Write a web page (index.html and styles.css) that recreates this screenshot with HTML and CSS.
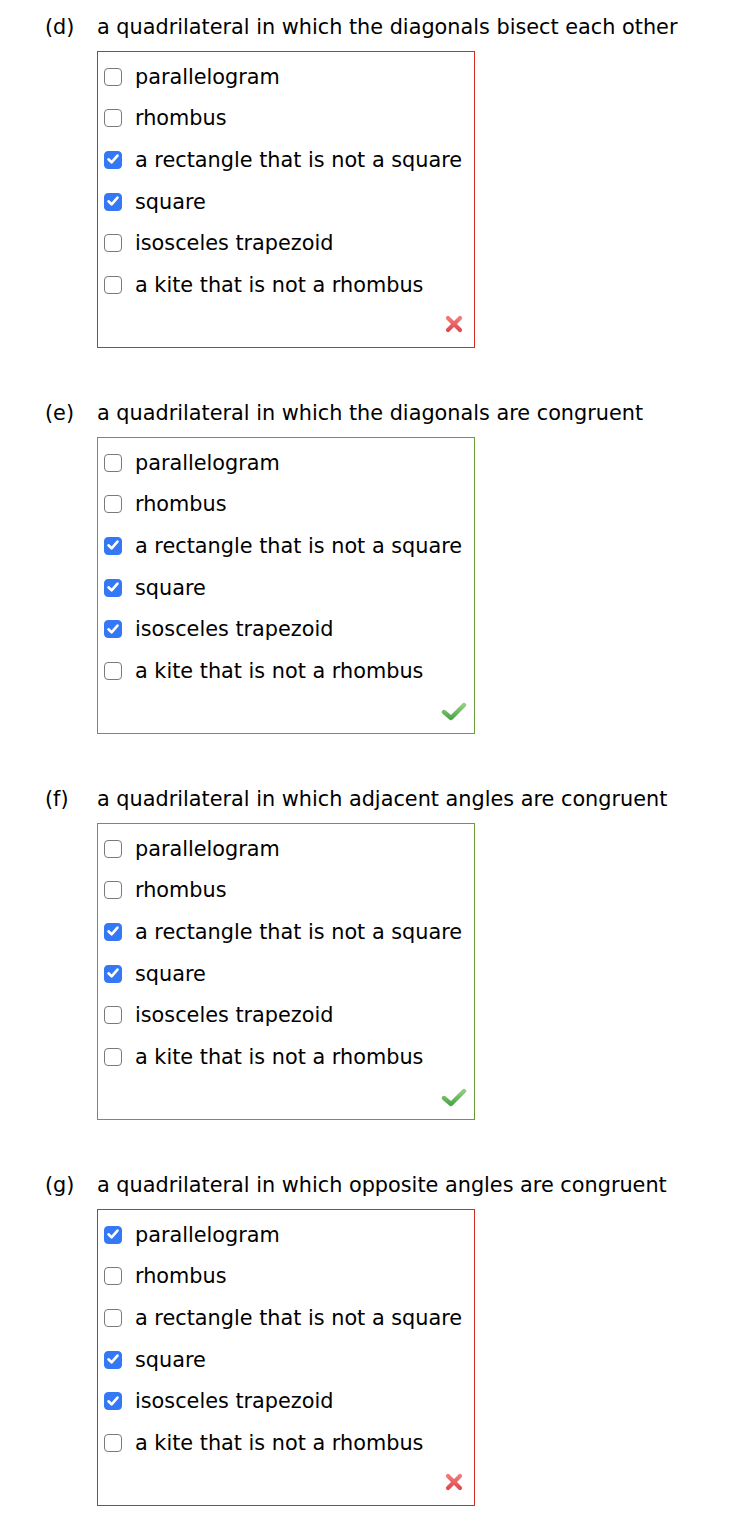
FILE: index.html
```html
<!DOCTYPE html>
<html>
<head>
<meta charset="utf-8">
<link rel="stylesheet" href="styles.css">
</head>
<body>
<div class="page">

<section class="q">
  <div class="qhead"><span class="qlab">(d)</span><span class="qtext">a quadrilateral in which the diagonals bisect each other</span></div>
  <div class="box wrong">
    <div class="opt"><span class="cb"></span>parallelogram</div>
    <div class="opt"><span class="cb"></span>rhombus</div>
    <div class="opt"><span class="cb on"><svg viewBox="0 0 18 18"><path d="M4.5 9.3 L7.6 12.3 L13.5 5.6" fill="none" stroke="#fff" stroke-width="2.6" stroke-linecap="round" stroke-linejoin="round"/></svg></span>a rectangle that is not a square</div>
    <div class="opt"><span class="cb on"><svg viewBox="0 0 18 18"><path d="M4.5 9.3 L7.6 12.3 L13.5 5.6" fill="none" stroke="#fff" stroke-width="2.6" stroke-linecap="round" stroke-linejoin="round"/></svg></span>square</div>
    <div class="opt"><span class="cb"></span>isosceles trapezoid</div>
    <div class="opt"><span class="cb"></span>a kite that is not a rhombus</div>
    <div class="foot"><svg class="xmark" viewBox="0 0 20 20"><defs><linearGradient id="rx" x1="0" y1="0" x2="0" y2="1"><stop offset="0" stop-color="#f07a7a"/><stop offset="1" stop-color="#e04b4f"/></linearGradient></defs><path d="M4 4 L16 16 M16 4 L4 16" stroke="url(#rx)" stroke-width="4.2" stroke-linecap="round"/></svg></div>
  </div>
</section>

<section class="q">
  <div class="qhead"><span class="qlab">(e)</span><span class="qtext">a quadrilateral in which the diagonals are congruent</span></div>
  <div class="box right">
    <div class="opt"><span class="cb"></span>parallelogram</div>
    <div class="opt"><span class="cb"></span>rhombus</div>
    <div class="opt"><span class="cb on"><svg viewBox="0 0 18 18"><path d="M4.5 9.3 L7.6 12.3 L13.5 5.6" fill="none" stroke="#fff" stroke-width="2.6" stroke-linecap="round" stroke-linejoin="round"/></svg></span>a rectangle that is not a square</div>
    <div class="opt"><span class="cb on"><svg viewBox="0 0 18 18"><path d="M4.5 9.3 L7.6 12.3 L13.5 5.6" fill="none" stroke="#fff" stroke-width="2.6" stroke-linecap="round" stroke-linejoin="round"/></svg></span>square</div>
    <div class="opt"><span class="cb on"><svg viewBox="0 0 18 18"><path d="M4.5 9.3 L7.6 12.3 L13.5 5.6" fill="none" stroke="#fff" stroke-width="2.6" stroke-linecap="round" stroke-linejoin="round"/></svg></span>isosceles trapezoid</div>
    <div class="opt"><span class="cb"></span>a kite that is not a rhombus</div>
    <div class="foot"><svg class="ckmark" viewBox="0 0 26 20"><defs><linearGradient id="gc1" x1="0" y1="0" x2="0" y2="1"><stop offset="0" stop-color="#8fcf7f"/><stop offset="1" stop-color="#4fa64a"/></linearGradient></defs><path d="M3 11 L10 17 L23 4" fill="none" stroke="url(#gc1)" stroke-width="4.4" stroke-linecap="round" stroke-linejoin="round"/></svg></div>
  </div>
</section>

<section class="q">
  <div class="qhead"><span class="qlab">(f)</span><span class="qtext">a quadrilateral in which adjacent angles are congruent</span></div>
  <div class="box right">
    <div class="opt"><span class="cb"></span>parallelogram</div>
    <div class="opt"><span class="cb"></span>rhombus</div>
    <div class="opt"><span class="cb on"><svg viewBox="0 0 18 18"><path d="M4.5 9.3 L7.6 12.3 L13.5 5.6" fill="none" stroke="#fff" stroke-width="2.6" stroke-linecap="round" stroke-linejoin="round"/></svg></span>a rectangle that is not a square</div>
    <div class="opt"><span class="cb on"><svg viewBox="0 0 18 18"><path d="M4.5 9.3 L7.6 12.3 L13.5 5.6" fill="none" stroke="#fff" stroke-width="2.6" stroke-linecap="round" stroke-linejoin="round"/></svg></span>square</div>
    <div class="opt"><span class="cb"></span>isosceles trapezoid</div>
    <div class="opt"><span class="cb"></span>a kite that is not a rhombus</div>
    <div class="foot"><svg class="ckmark" viewBox="0 0 26 20"><defs><linearGradient id="gc2" x1="0" y1="0" x2="0" y2="1"><stop offset="0" stop-color="#8fcf7f"/><stop offset="1" stop-color="#4fa64a"/></linearGradient></defs><path d="M3 11 L10 17 L23 4" fill="none" stroke="url(#gc2)" stroke-width="4.4" stroke-linecap="round" stroke-linejoin="round"/></svg></div>
  </div>
</section>

<section class="q">
  <div class="qhead"><span class="qlab">(g)</span><span class="qtext">a quadrilateral in which opposite angles are congruent</span></div>
  <div class="box wrong">
    <div class="opt"><span class="cb on"><svg viewBox="0 0 18 18"><path d="M4.5 9.3 L7.6 12.3 L13.5 5.6" fill="none" stroke="#fff" stroke-width="2.6" stroke-linecap="round" stroke-linejoin="round"/></svg></span>parallelogram</div>
    <div class="opt"><span class="cb"></span>rhombus</div>
    <div class="opt"><span class="cb"></span>a rectangle that is not a square</div>
    <div class="opt"><span class="cb on"><svg viewBox="0 0 18 18"><path d="M4.5 9.3 L7.6 12.3 L13.5 5.6" fill="none" stroke="#fff" stroke-width="2.6" stroke-linecap="round" stroke-linejoin="round"/></svg></span>square</div>
    <div class="opt"><span class="cb on"><svg viewBox="0 0 18 18"><path d="M4.5 9.3 L7.6 12.3 L13.5 5.6" fill="none" stroke="#fff" stroke-width="2.6" stroke-linecap="round" stroke-linejoin="round"/></svg></span>isosceles trapezoid</div>
    <div class="opt"><span class="cb"></span>a kite that is not a rhombus</div>
    <div class="foot"><svg class="xmark" viewBox="0 0 20 20"><defs><linearGradient id="rx2" x1="0" y1="0" x2="0" y2="1"><stop offset="0" stop-color="#f07a7a"/><stop offset="1" stop-color="#e04b4f"/></linearGradient></defs><path d="M4 4 L16 16 M16 4 L4 16" stroke="url(#rx2)" stroke-width="4.2" stroke-linecap="round"/></svg></div>
  </div>
</section>

</div>
</body>
</html>
```
FILE: styles.css
```css
html, body {
  margin: 0;
  padding: 0;
  background: #fff;
}
body {
  font-family: "DejaVu Sans", Verdana, sans-serif;
  font-size: 20.8px;
  color: #000;
}
.page {
  padding: 12px 0 0 45px;
  display: flex;
  flex-direction: column;
  gap: 50px;
}
.q {
  display: flex;
  flex-direction: column;
  gap: 9px;
}
.qhead {
  display: flex;
  line-height: 30px;
  height: 30px;
  white-space: nowrap;
}
.qlab {
  width: 52px;
  flex: none;
}
.box {
  margin-left: 52px;
  width: 378px;
  height: 297px;
  box-sizing: border-box;
  border: 1px solid #999;
  padding: 4px 0 0 6px;
  display: flex;
  flex-direction: column;
}
.box.wrong { border-color: #d02e24; }
.box.right { border-color: #6a9c3a; }
.opt {
  height: 41.6px;
  display: flex;
  align-items: center;
  white-space: nowrap;
}
.cb {
  width: 18px;
  height: 18px;
  box-sizing: border-box;
  border: 1.5px solid #7a7a7a;
  border-radius: 4px;
  margin-right: 13px;
  flex: none;
  background: #fff;
  display: flex;
}
.cb.on {
  background: #3478f6;
  border-color: #3478f6;
}
.cb svg {
  width: 100%;
  height: 100%;
  display: block;
}
.cb.on svg {
  margin: -1.5px;
  width: 18px;
  height: 18px;
}
.foot {
  flex: 1;
  display: flex;
  justify-content: flex-end;
  align-items: flex-start;
  padding: 8px 10px 0 0;
}
.xmark {
  width: 20px;
  height: 20px;
  display: block;
}
.ckmark {
  width: 26px;
  height: 20px;
  display: block;
  margin-top: 1px;
  margin-right: -3px;
}
```
